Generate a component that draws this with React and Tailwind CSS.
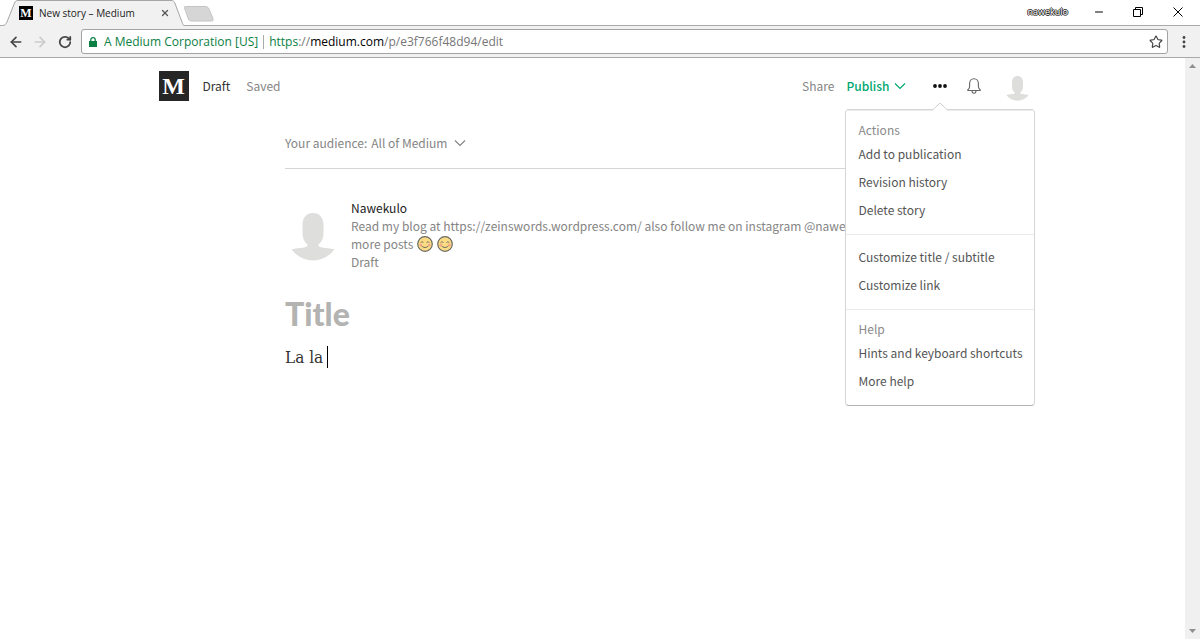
import React, { useState } from "react";
import { ArrowLeft, ArrowRight, RotateCw, Star, X, Minus } from "lucide-react";

const menuSections = [
  {
    title: "Actions",
    items: ["Add to publication", "Revision history", "Delete story"],
  },
  {
    items: ["Customize title / subtitle", "Customize link"],
  },
  {
    title: "Help",
    items: ["Hints and keyboard shortcuts", "More help"],
  },
];

function Avatar({ className }) {
  return (
    <svg viewBox="0 0 44 48" className={className} fill="#dededd" aria-hidden="true">
      <path d="M22 0C28.500 0 32.500 4.500 32.500 12V20C32.500 25 31 29 27.500 31.500V33C30 35.500 38 34.500 43.500 36.500C38 43.500 30.500 47.500 22 47.500C13.500 47.500 6 43.500 0.500 36.500C6 34.500 14 35.500 16.500 33V31.500C13 29 11.500 25 11.500 20V12C11.500 4.500 15.500 0 22 0Z" />
    </svg>
  );
}

function Chevron() {
  return (
    <svg viewBox="0 0 12 8" className="h-2 w-3" fill="none" stroke="currentColor" strokeWidth="1.200" aria-hidden="true">
      <path d="M1 1.500L6 6.500L11 1.500" />
    </svg>
  );
}

function Smile() {
  return (
    <svg viewBox="0 0 16 16" className="h-4 w-4" fill="none" role="img" aria-label="smile">
      <circle cx="8" cy="8" r="7.300" fill="#fbdc84" stroke="#6b6a60" strokeWidth="1.200" />
      <circle cx="3.800" cy="9" r="1.500" fill="#f6a98b" />
      <circle cx="12.200" cy="9" r="1.500" fill="#f6a98b" />
      <path d="M3.800 6.600C4.300 5.500 5.800 5.500 6.300 6.600M9.700 6.600C10.200 5.500 11.700 5.500 12.200 6.600M4.700 9.800C6 12 10 12 11.300 9.800" stroke="#6b6a60" strokeWidth="1" />
    </svg>
  );
}

function TabStrip() {
  return (
    <div className="flex h-[26px] items-start border-b border-[#a9a9a9] bg-white">
      <div className="relative flex h-[26px] w-[184px] shrink-0 items-center pl-[19px] pr-3.5">
        <svg viewBox="0 0 184 26" className="absolute inset-0 h-full w-full" aria-hidden="true">
          <path d="M0 26V25.500H2.500C5 25.500 6 24 7 22L14.500 3C15.300 1.200 16 0.500 18 0.500H171C173 0.500 174 1.200 174.800 3L182 22C183 24.500 183.500 25.500 184 25.500V26Z" fill="#f1f1f1" />
          <path d="M0 25.500H2.500C5 25.500 6 24 7 22L14.500 3C15.300 1.200 16 0.500 18 0.500H171C173 0.500 174 1.200 174.800 3L182 22C183 24.500 183.500 25.500 184 25.500" fill="none" stroke="#a6a6a6" />
        </svg>
        <span className="relative flex h-3.5 w-3.5 items-center justify-center bg-black font-['Liberation_Serif',serif] text-xs font-bold text-white">
          M
        </span>
        <span className="relative ml-1.5 whitespace-nowrap text-[10px] text-[#222]">New story – Medium</span>
        <button aria-label="Close tab" className="relative ml-auto text-[#555]">
          <X className="h-2.5 w-2.5" strokeWidth={3} />
        </button>
      </div>
      <button aria-label="New tab" className="mt-1.5">
        <svg viewBox="0 0 30 16" className="h-4 w-[30px]" aria-hidden="true">
          <path d="M0.500 2C0 1 0.500 0.500 1.500 0.500H21C23 0.500 24 1 25 3L29 12.500C29.500 14.500 29 15 27.500 15H7.500C6 15 5 14.500 4.300 13Z" fill="#d6d6d6" stroke="#c4c4c4" />
        </svg>
      </button>
      <div className="ml-auto flex h-6 items-center text-black">
        <span className="text-[9px] leading-3 text-white [text-shadow:1px_0_0_#222,-1px_0_0_#222,0_1px_0_#222,0_-1px_0_#222]">
          nawekulo
        </span>
        <button aria-label="Minimize" className="ml-[25px]">
          <Minus className="h-3 w-3" strokeWidth={2} />
        </button>
        <button aria-label="Restore" className="ml-7">
          <svg viewBox="0 0 10 10" className="h-2.5 w-2.5" fill="none" stroke="currentColor" aria-hidden="true">
            <path d="M0.500 2.500H7.500V9.500H0.500ZM2.500 2.500V0.500H9.500V7.500H7.500" />
          </svg>
        </button>
        <button aria-label="Close" className="ml-[30px] mr-[17px]">
          <svg viewBox="0 0 10 10" className="h-2.5 w-2.5" stroke="currentColor" aria-hidden="true">
            <path d="M0.500 0.500L9.500 9.500M9.500 0.500L0.500 9.500" />
          </svg>
        </button>
      </div>
    </div>
  );
}

function Toolbar() {
  return (
    <div className="flex h-8 items-center border-b border-[#a9a9a9] bg-[#f1f1f1] pl-2 pr-3.5">
      <button aria-label="Back" className="text-[#444]">
        <ArrowLeft className="h-4 w-4" strokeWidth={2.5} />
      </button>
      <button aria-label="Forward" className="ml-2 text-[#ccc]">
        <ArrowRight className="h-4 w-4" strokeWidth={2.5} />
      </button>
      <button aria-label="Reload" className="ml-2.5 text-[#444]">
        <RotateCw className="h-3.5 w-3.5" strokeWidth={3} />
      </button>
      <div className="ml-[9px] flex h-[25px] flex-1 items-center rounded-[3px] border border-[#a3a3a3] bg-white pl-[7px] pr-1 text-xs text-[#767676]">
        <svg viewBox="0 0 8 10" className="h-2.5 w-2" aria-hidden="true">
          <path d="M0 4H8V10H0Z" fill="#0b8043" />
          <path d="M1.800 4.500V2.800C1.800 0 6.200 0 6.200 2.800V4.500" fill="none" stroke="#0b8043" strokeWidth="1.300" />
        </svg>
        <span className="ml-[7px] whitespace-nowrap text-[#0b8043]">A Medium Corporation [US]</span>
        <span className="mx-[5px] h-3.5 w-px bg-[#aaa]" />
        <span className="text-[#0b8043]">https</span>
        <span>://</span>
        <span className="text-black">medium.com</span>
        <input aria-label="Address" defaultValue="/p/e3f766f48d94/edit" className="min-w-0 flex-1 outline-none" />
        <button aria-label="Bookmark this page" className="text-[#444]">
          <Star className="h-3.5 w-3.5" strokeWidth={2} />
        </button>
      </div>
      <button aria-label="Browser menu" className="ml-3.5">
        <svg viewBox="0 0 4 12" className="h-3 w-1" fill="#444" aria-hidden="true">
          <circle cx="2" cy="1.500" r="1.400" />
          <circle cx="2" cy="6" r="1.400" />
          <circle cx="2" cy="10.500" r="1.400" />
        </svg>
      </button>
    </div>
  );
}

function StoryMenu() {
  return (
    <div className="absolute left-1/2 top-full z-10 mt-[15px] w-[190px] -translate-x-1/2 rounded border border-[#d5d5d5] border-b-[#b5b5b5] bg-white">
      <svg viewBox="0 0 18 9" className="absolute -top-2 left-1/2 h-[9px] w-[18px] -translate-x-1/2" aria-hidden="true">
        <path d="M1 8.500L9 1L17 8.500V9H1Z" fill="white" />
        <path d="M1 8.500L9 1L17 8.500" fill="none" stroke="#d0d0d0" />
      </svg>
      {menuSections.map((section, i) => (
        <div key={i} className="border-[#ebebeb] pb-2.5 pt-2 not-first:border-t">
          {section.title && <p className="h-[21px] px-[13px] leading-[21px] text-[#8a8a8a]">{section.title}</p>}
          {section.items.map((item) => (
            <button key={item} className="block h-7 w-full whitespace-nowrap px-[13px] text-left text-[#555]">
              {item}
            </button>
          ))}
        </div>
      ))}
    </div>
  );
}

function Header() {
  const [open, setOpen] = useState(true);

  return (
    <header className="mx-auto flex h-14 max-w-[872px] items-center pl-0.5 text-[#858585]">
      <a
        href="#"
        aria-label="Medium"
        className="flex h-[30px] w-[30px] items-center justify-center bg-[#262626] font-['Liberation_Serif',serif] text-2xl font-bold text-white"
      >
        M
      </a>
      <span className="ml-3.5 text-[#333]">Draft</span>
      <span className="ml-4">Saved</span>
      <button className="ml-auto">Share</button>
      <button className="ml-3 flex items-center gap-1 font-medium text-[#00a870]">
        Publish
        <Chevron />
      </button>
      <div className="relative ml-[27px] flex">
        <button aria-label="Story options" onClick={() => setOpen(!open)} className="py-1.5">
          <svg viewBox="0 0 14 4" className="h-1 w-3.5" fill="#111" aria-hidden="true">
            <circle cx="2" cy="2" r="1.900" />
            <circle cx="7" cy="2" r="1.900" />
            <circle cx="12" cy="2" r="1.900" />
          </svg>
        </button>
        {open && <StoryMenu />}
      </div>
      <button aria-label="Notifications" className="ml-5">
        <svg viewBox="0 0 14 16" className="h-4 w-3.5" fill="none" stroke="#666" strokeWidth="1.100" aria-hidden="true">
          <path d="M0.800 12.500V11.800C2 10.800 2.600 10 2.600 8.500V5.500C2.600 2.800 4.400 0.700 7 0.700C9.600 0.700 11.400 2.800 11.400 5.500V8.500C11.400 10 12 10.800 13.200 11.800V12.500ZM5 12.700C5 16 9 16 9 12.700" />
        </svg>
      </button>
      <button aria-label="Profile" className="ml-[25px] mt-1">
        <Avatar className="h-[25px] w-[23px]" />
      </button>
    </header>
  );
}

export default function App() {
  return (
    <div className="flex min-h-screen flex-col bg-white font-['Open_Sans',sans-serif]">
      <TabStrip />
      <Toolbar />
      <div className="flex flex-1">
        <div className="min-w-0 flex-1 font-['Noto_Sans_CJK_JP',sans-serif] text-xs">
          <Header />
          <main className="mx-auto max-w-[615px] pt-[21px] text-[#858585]">
            <div className="flex h-[34px] items-start gap-1 border-b border-[#d5d5d5]">
              <span>Your audience:</span>
              <button className="flex items-center gap-1.5">
                All of Medium
                <Chevron />
              </button>
            </div>
            <div className="flex pt-[30px] leading-[18px]">
              <Avatar className="ml-1.5 mt-3.5 h-12 w-11 shrink-0" />
              <div className="ml-4">
                <p className="text-[#222]">Nawekulo</p>
                <p className="whitespace-nowrap">
                  Read my blog at https://zeinswords.wordpress.com/ also follow me on instagram @nawekulo for
                </p>
                <p className="flex items-center gap-1">
                  more posts <Smile />
                  <Smile />
                </p>
                <p>Draft</p>
              </div>
            </div>
            <input
              aria-label="Title"
              placeholder="Title"
              className="mt-[18px] block h-12 w-full font-['Lato',sans-serif] text-[32px] font-black outline-none placeholder:text-[#b3b3b1]"
            />
            <div className="mt-2 flex h-6 items-center">
              <input
                aria-label="Story"
                defaultValue="La la"
                className="field-sizing-content font-['DejaVu_Serif_Condensed','DejaVu_Serif',serif] text-[17px] text-[#333] outline-none"
              />
              <span className="ml-1 h-[22px] w-px bg-black" />
            </div>
          </main>
        </div>
        <div className="flex w-[15px] flex-col items-center justify-between bg-[#f0f0f0] py-1.5">
          <svg viewBox="0 0 7 4" className="h-1 w-[7px]" fill="#8f8f8f" aria-hidden="true">
            <path d="M0 4L3.500 0L7 4Z" />
          </svg>
          <svg viewBox="0 0 7 4" className="h-1 w-[7px]" fill="#8f8f8f" aria-hidden="true">
            <path d="M0 0H7L3.500 4Z" />
          </svg>
        </div>
      </div>
    </div>
  );
}
